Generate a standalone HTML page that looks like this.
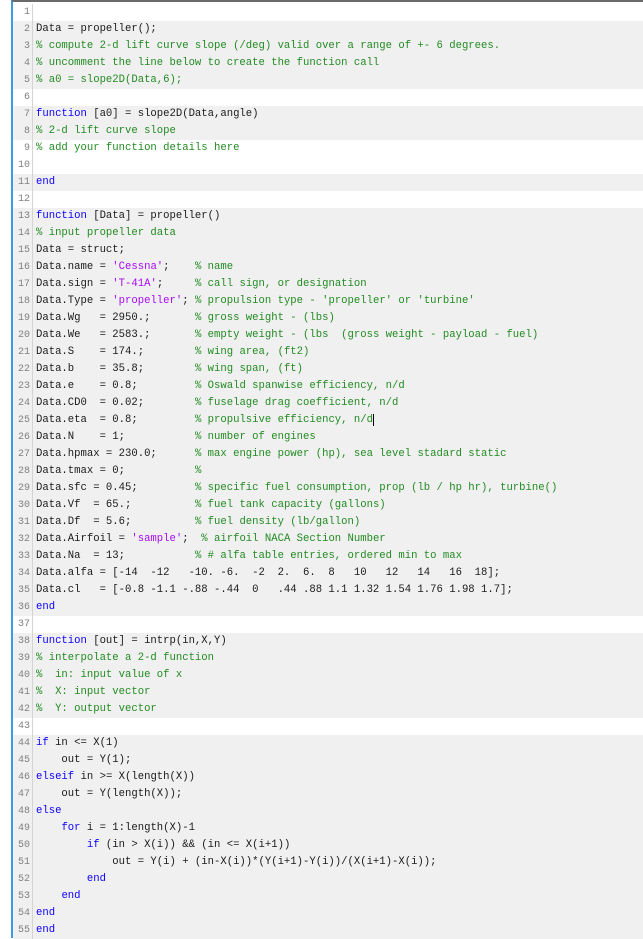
<!DOCTYPE html>
<html><head><meta charset="utf-8"><style>
html,body{margin:0;padding:0;background:#fff;width:643px;height:938px;overflow:hidden}
#ed{position:absolute;left:11px;top:0;width:632px;border-top:2px solid #6a6a6a;border-left:2px solid #3c9be3;height:938px;padding-top:2px;box-sizing:border-box}
.r{height:17px;line-height:17px;display:flex;font-family:"Liberation Mono",monospace;font-size:10.6px;color:#1a1a1a;white-space:pre}
.r.g{background:#f0f0f0}
.n{width:17px;text-align:right;padding-right:2px;color:#808080;border-right:1px solid #d4d4d4;font-size:10px;flex:none}
.c{padding-left:3px}
.k{color:#0e00ff}.m{color:#228b22}.s{color:#a709f5}
.cur{border-right:1px solid #000}
</style></head><body><div id="ed">
<div class="r"><span class="n">1</span><span class="c"></span></div>
<div class="r g"><span class="n">2</span><span class="c">Data = propeller();</span></div>
<div class="r g"><span class="n">3</span><span class="c m">% compute 2-d lift curve slope (/deg) valid over a range of +- 6 degrees.</span></div>
<div class="r g"><span class="n">4</span><span class="c m">% uncomment the line below to create the function call</span></div>
<div class="r g"><span class="n">5</span><span class="c m">% a0 = slope2D(Data,6);</span></div>
<div class="r"><span class="n">6</span><span class="c"></span></div>
<div class="r g"><span class="n">7</span><span class="c"><span class="k">function</span> [a0] = slope2D(Data,angle)</span></div>
<div class="r g"><span class="n">8</span><span class="c m">% 2-d lift curve slope</span></div>
<div class="r"><span class="n">9</span><span class="c m">% add your function details here</span></div>
<div class="r"><span class="n">10</span><span class="c"></span></div>
<div class="r g"><span class="n">11</span><span class="c k">end</span></div>
<div class="r"><span class="n">12</span><span class="c"></span></div>
<div class="r g"><span class="n">13</span><span class="c"><span class="k">function</span> [Data] = propeller()</span></div>
<div class="r g"><span class="n">14</span><span class="c m">% input propeller data</span></div>
<div class="r g"><span class="n">15</span><span class="c">Data = struct;</span></div>
<div class="r g"><span class="n">16</span><span class="c">Data.name = <span class="s">'Cessna'</span>;    <span class="m">% name</span></span></div>
<div class="r g"><span class="n">17</span><span class="c">Data.sign = <span class="s">'T-41A'</span>;     <span class="m">% call sign, or designation</span></span></div>
<div class="r g"><span class="n">18</span><span class="c">Data.Type = <span class="s">'propeller'</span>; <span class="m">% propulsion type - 'propeller' or 'turbine'</span></span></div>
<div class="r g"><span class="n">19</span><span class="c">Data.Wg   = 2950.;       <span class="m">% gross weight - (lbs)</span></span></div>
<div class="r g"><span class="n">20</span><span class="c">Data.We   = 2583.;       <span class="m">% empty weight - (lbs  (gross weight - payload - fuel)</span></span></div>
<div class="r g"><span class="n">21</span><span class="c">Data.S    = 174.;        <span class="m">% wing area, (ft2)</span></span></div>
<div class="r g"><span class="n">22</span><span class="c">Data.b    = 35.8;        <span class="m">% wing span, (ft)</span></span></div>
<div class="r g"><span class="n">23</span><span class="c">Data.e    = 0.8;         <span class="m">% Oswald spanwise efficiency, n/d</span></span></div>
<div class="r g"><span class="n">24</span><span class="c">Data.CD0  = 0.02;        <span class="m">% fuselage drag coefficient, n/d</span></span></div>
<div class="r g"><span class="n">25</span><span class="c">Data.eta  = 0.8;         <span class="m cur">% propulsive efficiency, n/d</span></span></div>
<div class="r g"><span class="n">26</span><span class="c">Data.N    = 1;           <span class="m">% number of engines</span></span></div>
<div class="r g"><span class="n">27</span><span class="c">Data.hpmax = 230.0;      <span class="m">% max engine power (hp), sea level stadard static</span></span></div>
<div class="r g"><span class="n">28</span><span class="c">Data.tmax = 0;           <span class="m">%</span></span></div>
<div class="r g"><span class="n">29</span><span class="c">Data.sfc = 0.45;         <span class="m">% specific fuel consumption, prop (lb / hp hr), turbine()</span></span></div>
<div class="r g"><span class="n">30</span><span class="c">Data.Vf  = 65.;          <span class="m">% fuel tank capacity (gallons)</span></span></div>
<div class="r g"><span class="n">31</span><span class="c">Data.Df  = 5.6;          <span class="m">% fuel density (lb/gallon)</span></span></div>
<div class="r g"><span class="n">32</span><span class="c">Data.Airfoil = <span class="s">'sample'</span>;  <span class="m">% airfoil NACA Section Number</span></span></div>
<div class="r g"><span class="n">33</span><span class="c">Data.Na  = 13;           <span class="m">% # alfa table entries, ordered min to max</span></span></div>
<div class="r g"><span class="n">34</span><span class="c">Data.alfa = [-14  -12   -10. -6.  -2  2.  6.  8   10   12   14   16  18];</span></div>
<div class="r g"><span class="n">35</span><span class="c">Data.cl   = [-0.8 -1.1 -.88 -.44  0   .44 .88 1.1 1.32 1.54 1.76 1.98 1.7];</span></div>
<div class="r g"><span class="n">36</span><span class="c k">end</span></div>
<div class="r"><span class="n">37</span><span class="c"></span></div>
<div class="r g"><span class="n">38</span><span class="c"><span class="k">function</span> [out] = intrp(in,X,Y)</span></div>
<div class="r g"><span class="n">39</span><span class="c m">% interpolate a 2-d function</span></div>
<div class="r g"><span class="n">40</span><span class="c m">%  in: input value of x</span></div>
<div class="r g"><span class="n">41</span><span class="c m">%  X: input vector</span></div>
<div class="r g"><span class="n">42</span><span class="c m">%  Y: output vector</span></div>
<div class="r"><span class="n">43</span><span class="c"></span></div>
<div class="r g"><span class="n">44</span><span class="c"><span class="k">if</span> in &lt;= X(1)</span></div>
<div class="r g"><span class="n">45</span><span class="c">    out = Y(1);</span></div>
<div class="r g"><span class="n">46</span><span class="c"><span class="k">elseif</span> in &gt;= X(length(X))</span></div>
<div class="r g"><span class="n">47</span><span class="c">    out = Y(length(X));</span></div>
<div class="r g"><span class="n">48</span><span class="c k">else</span></div>
<div class="r g"><span class="n">49</span><span class="c">    <span class="k">for</span> i = 1:length(X)-1</span></div>
<div class="r g"><span class="n">50</span><span class="c">        <span class="k">if</span> (in &gt; X(i)) &amp;&amp; (in &lt;= X(i+1))</span></div>
<div class="r g"><span class="n">51</span><span class="c">            out = Y(i) + (in-X(i))*(Y(i+1)-Y(i))/(X(i+1)-X(i));</span></div>
<div class="r g"><span class="n">52</span><span class="c">        <span class="k">end</span></span></div>
<div class="r g"><span class="n">53</span><span class="c">    <span class="k">end</span></span></div>
<div class="r g"><span class="n">54</span><span class="c k">end</span></div>
<div class="r g"><span class="n">55</span><span class="c k">end</span></div>
</div></body></html>
